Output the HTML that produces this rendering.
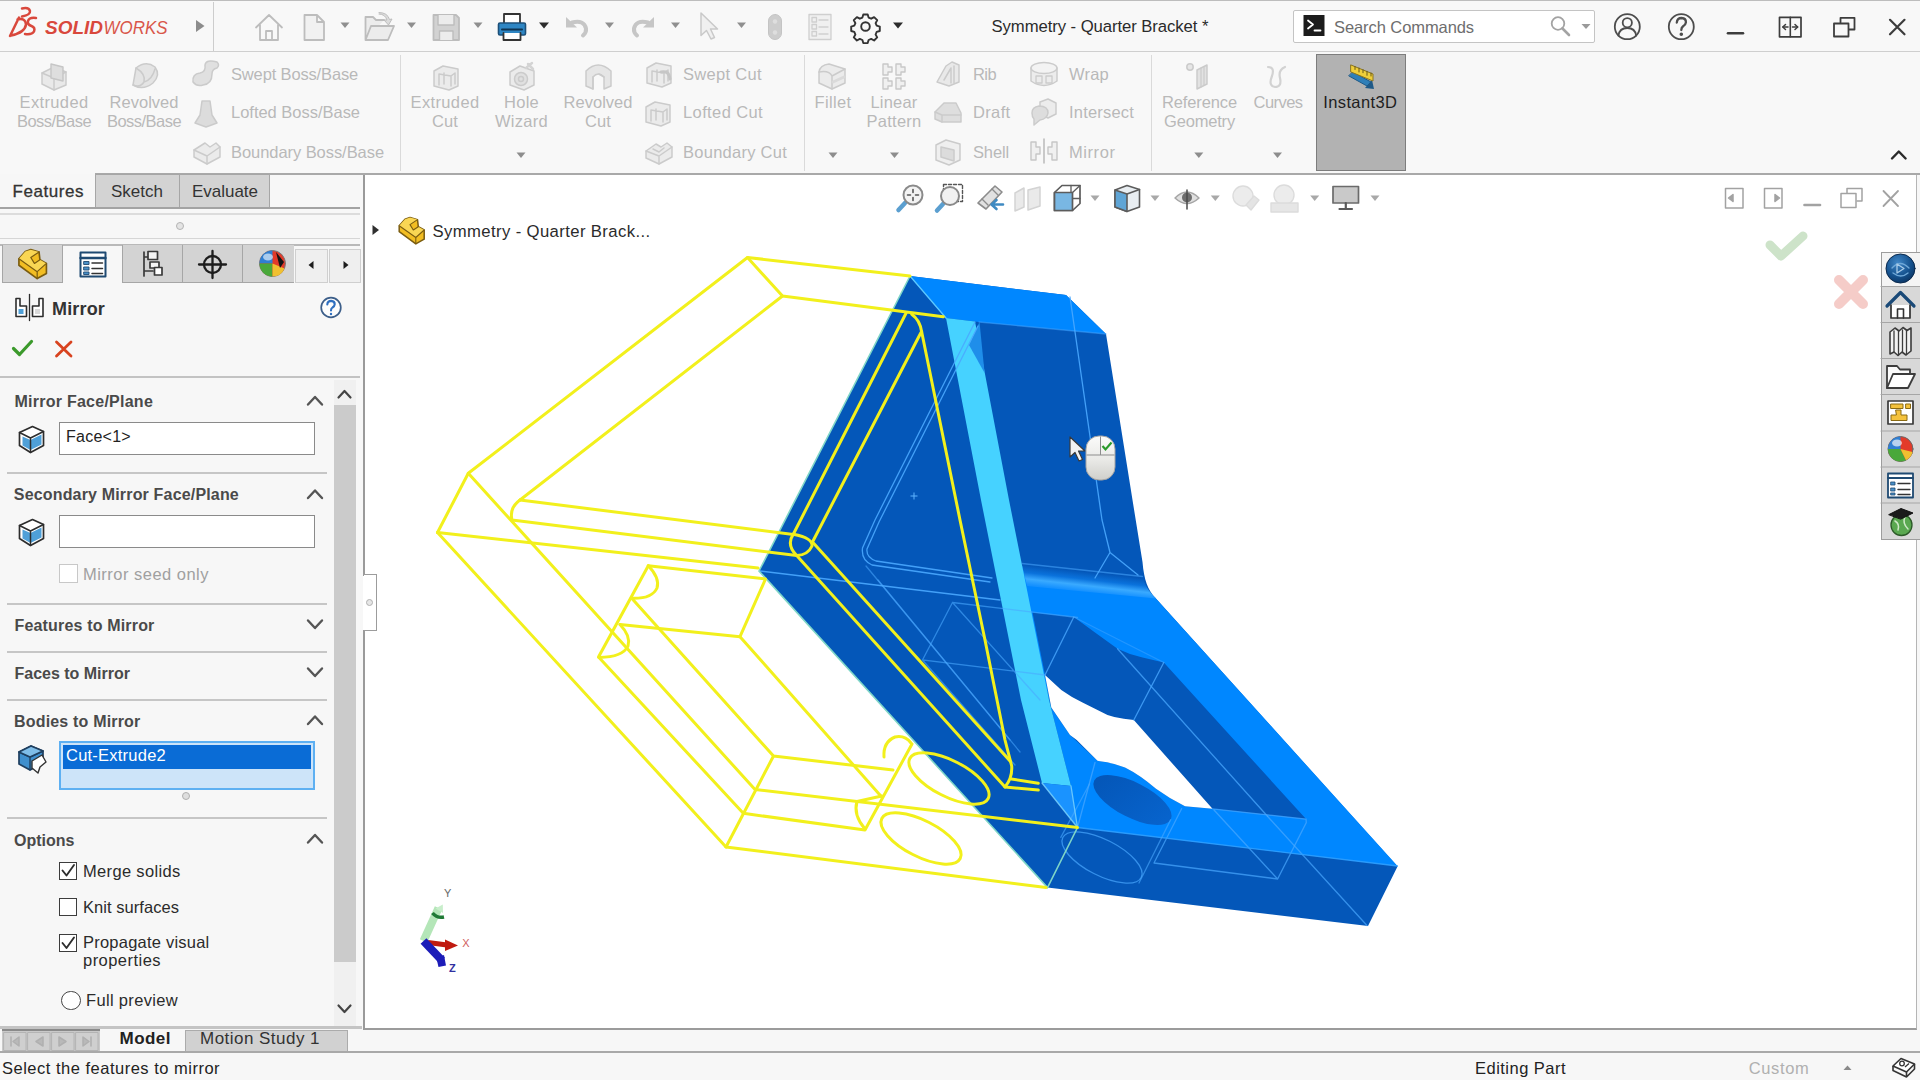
<!DOCTYPE html>
<html lang="en">
<head>
<meta charset="utf-8">
<title>SOLIDWORKS - Symmetry - Quarter Bracket</title>
<style>
html,body{margin:0;padding:0;}
body{width:1920px;height:1080px;overflow:hidden;position:relative;background:#f7f7f7;font-family:"Liberation Sans",sans-serif;}
.a{position:absolute;box-sizing:border-box;}
.t{position:absolute;white-space:nowrap;line-height:20px;font-family:"Liberation Sans",sans-serif;}
svg{position:absolute;overflow:visible;}
.sep{position:absolute;height:2px;background:#c6c6c6;left:7px;width:320px;}
.tab{position:absolute;box-sizing:border-box;background:#d3d3d3;border:1px solid #a6a6a6;}
.chk{position:absolute;box-sizing:border-box;width:18px;height:18px;background:#fff;border:1.5px solid #3c3c3c;}
</style>
</head>
<body>
<!-- ================= title bar ================= -->
<div class="a" id="titlebar" style="left:0;top:0;width:1920px;height:52px;background:#f8f8f8;border-top:1px solid #bdbdbd;border-bottom:1px solid #cfcfcf;"></div>
<div class="a" style="left:213px;top:2px;width:1px;height:49px;background:#cdcdcd;"></div>
<div class="a" id="search" style="left:1293px;top:10px;width:302px;height:33px;background:#fff;border:1px solid #c4c4c4;border-radius:2px;"></div>

<!-- ================= ribbon (CommandManager) ================= -->
<div class="a" id="ribbon" style="left:0;top:52px;width:1920px;height:122px;background:#f8f8f8;"></div>
<div class="a" style="left:400px;top:55px;width:1px;height:116px;background:#dadada;"></div>
<div class="a" style="left:804px;top:55px;width:1px;height:116px;background:#dadada;"></div>
<div class="a" style="left:1151px;top:55px;width:1px;height:116px;background:#dadada;"></div>
<div class="a" id="instant3d" style="left:1316px;top:54px;width:90px;height:117px;background:#b2b2b2;border:1.5px solid #7d7d7d;"></div>
<div class="a" style="left:95px;top:173px;width:1825px;height:2px;background:#a9a9a9;"></div>

<!-- ================= command manager tabs ================= -->
<div class="a" style="left:0;top:175px;width:362px;height:33px;background:#f7f7f7;"></div>
<div class="tab" style="left:95px;top:174px;width:85px;height:34px;"></div>
<div class="tab" style="left:179px;top:174px;width:91px;height:34px;"></div>
<div class="a" style="left:0;top:207px;width:360px;height:2px;background:#a3a3a3;"></div>
<div class="a" style="left:0;top:213px;width:360px;height:2px;background:#dcdcdc;"></div>
<div class="a" style="left:176px;top:222px;width:8px;height:8px;border-radius:50%;border:1.5px solid #b4b4b4;background:#e4e4e4;"></div>
<div class="a" style="left:0;top:238px;width:360px;height:1px;background:#d6d6d6;"></div>

<!-- ================= property manager icon tabs ================= -->
<div class="a" style="left:0;top:244px;width:360px;height:2px;background:#b9b9b9;"></div>
<div class="tab" style="left:2px;top:245px;width:61px;height:38px;border-top:none;"></div>
<div class="a" style="left:63px;top:246px;width:60px;height:38px;background:#f7f7f7;"></div>
<div class="tab" style="left:122px;top:245px;width:61px;height:38px;border-top:none;"></div>
<div class="tab" style="left:182px;top:245px;width:61px;height:38px;border-top:none;"></div>
<div class="tab" style="left:242px;top:245px;width:52px;height:38px;border-top:none;border-right:none;"></div>
<div class="a" style="left:295px;top:249px;width:33px;height:34px;background:#efefef;border:1px solid #cfcfcf;"></div>
<div class="a" style="left:329px;top:249px;width:32px;height:34px;background:#efefef;border:1px solid #cfcfcf;"></div>

<!-- ================= property manager body ================= -->
<div class="a" style="left:0;top:376px;width:360px;height:2px;background:#c3c3c3;"></div>
<div class="a" id="in1" style="left:59px;top:422px;width:256px;height:33px;background:#fff;border:1.5px solid #8a8a8a;"></div>
<div class="sep" style="top:472px;"></div>
<div class="a" id="in2" style="left:59px;top:515px;width:256px;height:33px;background:#fff;border:1.5px solid #8a8a8a;"></div>
<div class="a" style="left:59px;top:564px;width:19px;height:19px;background:#fff;border:1px solid #c8c8c8;"></div>
<div class="sep" style="top:603px;"></div>
<div class="sep" style="top:651px;"></div>
<div class="sep" style="top:699px;"></div>
<div class="a" id="list" style="left:59px;top:741px;width:256px;height:49px;background:#cde4f9;border:2px solid #5eb0f2;"></div>
<div class="a" style="left:62.5px;top:745px;width:248.5px;height:24px;background:#0a6cd6;"></div>
<div class="a" style="left:182px;top:792px;width:8px;height:8px;border-radius:50%;border:1.5px solid #b0b0b0;background:#dedede;"></div>
<div class="sep" style="top:817px;"></div>
<div class="chk" style="left:59px;top:861.5px;"></div>
<div class="chk" style="left:59px;top:897.5px;"></div>
<div class="chk" style="left:59px;top:934px;"></div>
<div class="a" style="left:61px;top:990.5px;width:19.5px;height:19.5px;border-radius:50%;background:#fff;border:1.5px solid #444;"></div>
<!-- scrollbar -->
<div class="a" style="left:334px;top:380px;width:22px;height:646px;background:#f0f0f0;"></div>
<div class="a" style="left:334px;top:405px;width:22px;height:557px;background:#cbcbcb;"></div>

<!-- ================= graphics viewport ================= -->
<div class="a" id="viewport" style="left:363px;top:175px;width:1554px;height:855px;background:#fff;border-left:2px solid #9a9a9a;border-bottom:2px solid #9b9b9b;border-right:1px solid #b5b5b5;"></div>
<div class="a" style="left:364px;top:574px;width:13px;height:57px;background:#fff;border:1.5px solid #9c9c9c;border-left:none;"></div>
<div class="a" style="left:363px;top:575.5px;width:3px;height:54px;background:#fff;"></div>
<div class="a" style="left:365.5px;top:598.5px;width:7px;height:7px;border-radius:50%;border:1.2px solid #b0b0b0;background:#e6e6e6;"></div>

<!-- ================= bottom tabs + status bar ================= -->
<div class="a" style="left:0;top:1026px;width:362px;height:3px;background:#c4c4c4;"></div>
<div class="a" style="left:0;top:1030px;width:1920px;height:22px;background:#f7f7f7;"></div>
<div class="a" style="left:2px;top:1029px;width:98px;height:23px;background:#c9c9c9;border-top:2px solid #8a8a8a;"></div>
<div class="a" style="left:100px;top:1029px;width:86px;height:23px;background:#f7f7f7;"></div>
<div class="a" style="left:185px;top:1030px;width:163px;height:22px;background:#d1d1d1;border:1px solid #ababab;border-bottom:none;"></div>
<div class="a" style="left:0;top:1051px;width:1920px;height:2px;background:#a9a9a9;"></div>
<div class="a" id="statusbar" style="left:0;top:1053px;width:1920px;height:27px;background:#f7f7f7;"></div>
<div id="labels">
<span class="t" style="left:991.5px;top:17.2px;font-size:16.7px;color:#2b2b2b;letter-spacing:-0.07px;">Symmetry - Quarter Bracket *</span>
<span class="t" style="left:1334.0px;top:17.3px;font-size:16.5px;color:#6e6e6e;letter-spacing:-0.08px;">Search Commands</span>
<span class="t" style="left:19.5px;top:92.3px;font-size:16.5px;color:#b9b9b9;letter-spacing:0.37px;">Extruded</span>
<span class="t" style="left:17.0px;top:111.3px;font-size:16.5px;color:#b9b9b9;letter-spacing:-0.54px;">Boss/Base</span>
<span class="t" style="left:109.5px;top:92.3px;font-size:16.5px;color:#b9b9b9;letter-spacing:0.03px;">Revolved</span>
<span class="t" style="left:107.0px;top:111.3px;font-size:16.5px;color:#b9b9b9;letter-spacing:-0.54px;">Boss/Base</span>
<span class="t" style="left:410.5px;top:92.3px;font-size:16.5px;color:#b9b9b9;letter-spacing:0.37px;">Extruded</span>
<span class="t" style="left:432.0px;top:111.3px;font-size:16.5px;color:#b9b9b9;letter-spacing:0.11px;">Cut</span>
<span class="t" style="left:504.0px;top:92.3px;font-size:16.5px;color:#b9b9b9;letter-spacing:0.27px;">Hole</span>
<span class="t" style="left:495.0px;top:111.3px;font-size:16.5px;color:#b9b9b9;letter-spacing:0.28px;">Wizard</span>
<span class="t" style="left:563.5px;top:92.3px;font-size:16.5px;color:#b9b9b9;letter-spacing:0.03px;">Revolved</span>
<span class="t" style="left:585.0px;top:111.3px;font-size:16.5px;color:#b9b9b9;letter-spacing:0.11px;">Cut</span>
<span class="t" style="left:870.5px;top:92.3px;font-size:16.5px;color:#b9b9b9;letter-spacing:0.19px;">Linear</span>
<span class="t" style="left:866.5px;top:111.3px;font-size:16.5px;color:#b9b9b9;letter-spacing:0.26px;">Pattern</span>
<span class="t" style="left:1162.0px;top:92.3px;font-size:16.5px;color:#b9b9b9;letter-spacing:-0.13px;">Reference</span>
<span class="t" style="left:1164.0px;top:111.3px;font-size:16.5px;color:#b9b9b9;letter-spacing:-0.18px;">Geometry</span>
<span class="t" style="left:814.5px;top:92.3px;font-size:16.5px;color:#b9b9b9;letter-spacing:0.36px;">Fillet</span>
<span class="t" style="left:1253.5px;top:92.3px;font-size:16.5px;color:#b9b9b9;letter-spacing:-0.54px;">Curves</span>
<span class="t" style="left:1323.3px;top:92.3px;font-size:16.5px;color:#1e1e1e;letter-spacing:0.37px;">Instant3D</span>
<span class="t" style="left:231.0px;top:63.8px;font-size:16.5px;color:#b9b9b9;letter-spacing:-0.15px;">Swept Boss/Base</span>
<span class="t" style="left:231.0px;top:102.3px;font-size:16.5px;color:#b9b9b9;letter-spacing:-0.02px;">Lofted Boss/Base</span>
<span class="t" style="left:231.0px;top:141.8px;font-size:16.5px;color:#b9b9b9;letter-spacing:-0.06px;">Boundary Boss/Base</span>
<span class="t" style="left:683.0px;top:63.8px;font-size:16.5px;color:#b9b9b9;letter-spacing:0.32px;">Swept Cut</span>
<span class="t" style="left:683.0px;top:102.3px;font-size:16.5px;color:#b9b9b9;letter-spacing:0.39px;">Lofted Cut</span>
<span class="t" style="left:683.0px;top:141.8px;font-size:16.5px;color:#b9b9b9;letter-spacing:0.26px;">Boundary Cut</span>
<span class="t" style="left:973.0px;top:63.8px;font-size:16.5px;color:#b9b9b9;letter-spacing:-0.59px;">Rib</span>
<span class="t" style="left:973.0px;top:102.3px;font-size:16.5px;color:#b9b9b9;letter-spacing:0.35px;">Draft</span>
<span class="t" style="left:973.0px;top:141.8px;font-size:16.5px;color:#b9b9b9;letter-spacing:-0.14px;">Shell</span>
<span class="t" style="left:1069.0px;top:63.8px;font-size:16.5px;color:#b9b9b9;letter-spacing:0.22px;">Wrap</span>
<span class="t" style="left:1069.0px;top:102.3px;font-size:16.5px;color:#b9b9b9;letter-spacing:0.19px;">Intersect</span>
<span class="t" style="left:1069.0px;top:141.8px;font-size:16.5px;color:#b9b9b9;letter-spacing:0.57px;">Mirror</span>
<span class="t" style="left:12.5px;top:181.6px;font-size:17px;color:#333;letter-spacing:0.55px;-webkit-text-stroke:0.3px #333;">Features</span>
<span class="t" style="left:111.0px;top:181.6px;font-size:17px;color:#333;letter-spacing:0.00px;">Sketch</span>
<span class="t" style="left:192.0px;top:181.6px;font-size:17px;color:#333;letter-spacing:-0.02px;">Evaluate</span>
<span class="t" style="left:432.5px;top:222.2px;font-size:16.7px;color:#2b2b2b;letter-spacing:0.38px;">Symmetry - Quarter Brack...</span>
<span class="t" style="left:52.0px;top:298.8px;font-size:18px;color:#333;letter-spacing:0.17px;font-weight:bold;">Mirror</span>
<span class="t" style="left:14.5px;top:392.0px;font-size:16px;color:#4a4a4a;letter-spacing:0.25px;font-weight:bold;">Mirror Face/Plane</span>
<span class="t" style="left:66.0px;top:426.5px;font-size:16px;color:#222;letter-spacing:0.26px;">Face&lt;1&gt;</span>
<span class="t" style="left:13.8px;top:485.3px;font-size:16px;color:#4a4a4a;letter-spacing:0.17px;font-weight:bold;">Secondary Mirror Face/Plane</span>
<span class="t" style="left:83.0px;top:563.8px;font-size:16.5px;color:#a0a0a0;letter-spacing:0.48px;">Mirror seed only</span>
<span class="t" style="left:14.5px;top:615.5px;font-size:16px;color:#4a4a4a;letter-spacing:0.17px;font-weight:bold;">Features to Mirror</span>
<span class="t" style="left:14.5px;top:663.5px;font-size:16px;color:#4a4a4a;letter-spacing:-0.01px;font-weight:bold;">Faces to Mirror</span>
<span class="t" style="left:14.0px;top:711.5px;font-size:16px;color:#4a4a4a;letter-spacing:0.18px;font-weight:bold;">Bodies to Mirror</span>
<span class="t" style="left:66.0px;top:745.3px;font-size:16.5px;color:#fff;letter-spacing:0.23px;">Cut-Extrude2</span>
<span class="t" style="left:14.0px;top:830.5px;font-size:16px;color:#4a4a4a;letter-spacing:0.01px;font-weight:bold;">Options</span>
<span class="t" style="left:83.0px;top:861.3px;font-size:16.5px;color:#2b2b2b;letter-spacing:0.33px;">Merge solids</span>
<span class="t" style="left:83.0px;top:897.3px;font-size:16.5px;color:#2b2b2b;letter-spacing:0.05px;">Knit surfaces</span>
<span class="t" style="left:83.0px;top:932.3px;font-size:16.5px;color:#2b2b2b;letter-spacing:0.22px;">Propagate visual</span>
<span class="t" style="left:83.0px;top:950.3px;font-size:16.5px;color:#2b2b2b;letter-spacing:0.46px;">properties</span>
<span class="t" style="left:86.0px;top:990.1px;font-size:16.5px;color:#2b2b2b;letter-spacing:0.33px;">Full preview</span>
<span class="t" style="left:119.5px;top:1029.1px;font-size:17px;color:#222;letter-spacing:0.48px;font-weight:bold;">Model</span>
<span class="t" style="left:200.0px;top:1029.1px;font-size:17px;color:#333;letter-spacing:0.47px;">Motion Study 1</span>
<span class="t" style="left:2.0px;top:1058.1px;font-size:16.5px;color:#222;letter-spacing:0.50px;">Select the features to mirror</span>
<span class="t" style="left:1475.0px;top:1058.1px;font-size:16.5px;color:#222;letter-spacing:0.48px;">Editing Part</span>
<span class="t" style="left:1748.8px;top:1058.1px;font-size:16.5px;color:#b0b0b0;letter-spacing:0.61px;">Custom</span>
<span class="t" style="left:444.0px;top:882.9px;font-size:11px;color:#666;letter-spacing:0.66px;">Y</span>
<span class="t" style="left:462.2px;top:932.9px;font-size:11px;color:#d06060;letter-spacing:-0.34px;">X</span>
<span class="t" style="left:449.0px;top:957.9px;font-size:11px;color:#3030a0;letter-spacing:0.28px;font-weight:bold;">Z</span>
</div>
<!-- ================= icons ================= -->
<svg id="icons-top" style="left:0;top:0;" width="1920" height="180" viewBox="0 0 1920 180" fill="none" stroke-linejoin="round" stroke-linecap="round">
<!-- SOLIDWORKS logo -->
<g id="logo" stroke="#d9483c" fill="none" stroke-width="2.500">
  <path d="M22,8.5 q7,-1.5 8,2.5 q0.5,4 -8,5.5"/>
  <path d="M10,36 L19,17.5 M17.5,19.5 q8,-2 8.5,5 q-1,8 -15,11"/>
  <path d="M36,18 q-6.5,-1 -8,3 q-1,3.5 3.5,5 q4,1.500 2.5,5.500 q-2,3.500 -9,2.500"/>
</g>
<text x="45" y="33.5" font-family="Liberation Sans, sans-serif" font-size="17.5" font-weight="bold" font-style="italic" fill="#d9483c" stroke="none" textLength="58" lengthAdjust="spacingAndGlyphs">SOLID</text>
<text x="103.500" y="33.5" font-family="Liberation Sans, sans-serif" font-size="17.5" font-style="italic" fill="#d9564a" stroke="none" textLength="64" lengthAdjust="spacingAndGlyphs">WORKS</text>
<path d="M196,20 L204.500,26 L196,32 Z" fill="#8c8c8c" stroke="none"/>

<!-- quick access toolbar (mostly disabled / grey) -->
<g stroke="#bdbdbd" stroke-width="1.8" fill="none">
  <!-- home -->
  <path d="M256,27.500 L269,15 L282,27.500 M260,25 V40 H278 V25 M266,40 V31 H272 V40"/>
  <!-- new -->
  <path d="M304.500,15 H317 L324,22 V40 H304.500 Z M317,15 V22 H324" fill="#f1f1f1"/>
  <!-- open -->
  <path d="M365.500,40 V17 H373 L376,20 H384 M365.500,40 L371,26 H394 L388,40 Z" fill="#ececec"/>
  <path d="M379,14 q6,0 8,6 l-3,0 l4.500,5 l3.500,-6 l-2.500,0.500 q-2,-7 -10.500,-7" fill="#dcdcdc" stroke-width="1"/>
  <!-- save -->
  <path d="M433.500,15 H456 L459,18 V40 H433.500 Z" fill="#d2d2d2"/>
  <path d="M438,15 V25 H454 V15 M439.500,40 V31 H453 V40" fill="#ececec" stroke-width="1.4"/>
</g>
<g fill="#8f8f8f" stroke="none">
  <path d="M340.500,22.500 h9 l-4.500,5.500 z"/><path d="M407,22.500 h9 l-4.500,5.500 z"/><path d="M473.500,22.500 h9 l-4.500,5.500 z"/>
  <path d="M605,22.500 h9 l-4.500,5.500 z"/><path d="M671,22.500 h9 l-4.500,5.500 z"/><path d="M737,22.500 h9 l-4.500,5.500 z"/>
</g>
<g fill="#2c2c2c" stroke="none">
  <path d="M539,22.500 h10 l-5,6 z"/><path d="M893,22.500 h10 l-5,6 z"/>
</g>
<!-- print (enabled) -->
<g>
  <path d="M504,23 V14 H520 V23" fill="#fff" stroke="#333" stroke-width="1.8"/>
  <rect x="498.500" y="23" width="27" height="12" rx="1.500" fill="#2e86c4" stroke="#1d4f78" stroke-width="1.600"/>
  <path d="M502,29.500 H522" stroke="#0f3350" stroke-width="2"/>
  <path d="M503.500,33 V40 H520.500 V33" fill="#fff" stroke="#333" stroke-width="1.800"/>
</g>
<!-- undo / redo -->
<g stroke="#c6c6c6" stroke-width="4" fill="none">
  <path d="M572,22.500 q12,-3 14,6 q0.500,4 -3,7"/>
  <path d="M648,22.500 q-12,-3 -14,6 q-0.500,4 3,7"/>
</g>
<path d="M566,17 V27.500 H577 Z" fill="#c6c6c6" stroke="none"/>
<path d="M654,17 V27.500 H643 Z" fill="#c6c6c6" stroke="none"/>
<!-- select cursor -->
<path d="M701,13 V35.500 L706.500,30.500 L711,39 L714.500,37.500 L710.500,29 H717.500 Z" fill="#f0f0f0" stroke="#c9c9c9" stroke-width="1.500"/>
<!-- traffic light -->
<rect x="768.500" y="14.500" width="13" height="25" rx="6.500" fill="#cdcdcd" stroke="#c4c4c4" stroke-width="1"/>
<circle cx="775" cy="21.500" r="2.200" fill="#dedede" stroke="none"/><circle cx="775" cy="32.500" r="2.200" fill="#dedede" stroke="none"/>
<!-- options list -->
<g stroke="#cfcfcf" stroke-width="1.300" fill="none">
  <rect x="809" y="14.500" width="22" height="25" fill="#f0f0f0"/>
  <rect x="812" y="17.500" width="4.500" height="4.500"/><rect x="812" y="24.500" width="4.500" height="4.500"/><rect x="812" y="31.500" width="4.500" height="4.500"/>
  <path d="M819,20 H828 M819,27 H828 M819,34 H828"/>
</g>
<!-- gear (enabled) -->
<g transform="translate(865.5 26.500)">
  <path d="M-2.200,-12 h4.400 l0.900,3.100 l2.600,1.100 l2.900,-1.600 l3.100,3.100 l-1.600,2.900 l1.100,2.600 l3.100,0.900 v4.400 l-3.100,0.900 l-1.100,2.600 l1.600,2.900 l-3.100,3.100 l-2.900,-1.600 l-2.600,1.100 l-0.900,3.100 h-4.400 l-0.900,-3.100 l-2.600,-1.100 l-2.900,1.600 l-3.100,-3.100 l1.600,-2.900 l-1.100,-2.600 l-3.100,-0.900 v-4.400 l3.100,-0.900 l1.100,-2.600 l-1.600,-2.900 l3.100,-3.100 l2.900,1.600 l2.600,-1.100 z" fill="none" stroke="#333" stroke-width="1.900"/>
  <circle r="4.300" fill="none" stroke="#333" stroke-width="1.900"/>
</g>

<!-- search box -->
<rect x="1303.500" y="15" width="21" height="21" fill="#1c1c1c" stroke="none"/>
<path d="M1308,20.500 l5,4 l-5,4 M1314.500,30.500 h6" stroke="#fff" stroke-width="1.800" fill="none"/>
<circle cx="1558" cy="23.500" r="6.300" stroke="#a3a3a3" stroke-width="1.800" fill="none"/>
<path d="M1562.500,28.500 L1569,35" stroke="#a3a3a3" stroke-width="2.600"/>
<path d="M1581.500,24 h9 l-4.500,5 z" fill="#9a9a9a" stroke="none"/>
<!-- user / help -->
<g stroke="#4d4d4d" stroke-width="1.800" fill="none">
  <circle cx="1627.300" cy="26.700" r="12.500"/>
  <circle cx="1627.300" cy="22.700" r="4.600"/>
  <path d="M1618.500,35.500 q1,-7.500 8.800,-7.500 q7.800,0 8.800,7.500"/>
  <circle cx="1681.300" cy="26.700" r="12.500"/>
  <path d="M1676.800,22.500 q0.300,-4.500 4.800,-4.500 q4.500,0.300 4.300,4.300 q-0.300,2.500 -2.800,4 q-1.800,1.300 -1.800,3.700" stroke-width="2.300"/>
  <circle cx="1681.300" cy="34.300" r="0.900" fill="#4d4d4d"/>
</g>
<!-- window buttons -->
<g stroke="#3d3d3d" stroke-width="2" fill="none">
  <path d="M1728,33.300 H1743" stroke-width="2.600"/>
  <rect x="1779.500" y="17.300" width="21.500" height="19.500" stroke-width="1.700"/>
  <path d="M1790.300,17.300 V36.800 M1783,27 H1788 M1792.500,27 H1797.500" stroke-width="1.600"/>
  <path d="M1785.500,24.500 l-2.700,2.500 l2.700,2.500 M1795,24.500 l2.700,2.500 l-2.700,2.500" stroke-width="1.500"/>
  <path d="M1840.500,22.500 V17.800 H1854.500 V29.500 H1849.500" stroke-width="1.800"/>
  <rect x="1834" y="23.500" width="14.500" height="13" stroke-width="1.800"/>
  <path d="M1890,19.800 L1904.500,34.300 M1904.500,19.800 L1890,34.300" stroke-width="2.200"/>
  <path d="M1892,158.500 L1898.800,151.500 L1905.600,158.500" stroke-width="2.400" stroke="#2a2a2a"/>
</g>
</svg>
<!-- ================= ribbon icons (disabled look) ================= -->
<svg id="icons-ribbon" style="left:0;top:0;" width="1920" height="180" viewBox="0 0 1920 180" fill="none" stroke-linejoin="round" stroke-linecap="round">
<defs>
  <g id="blk" stroke="#cbcbcb" stroke-width="1.500">
    <path d="M-12,-4 L0,-10 L12,-5 V8 L0,13 L-12,7 Z" fill="#e9e9e9"/>
    <path d="M-12,-4 L0,1 L12,-5 M0,1 V13" />
  </g>
  <g id="cutblk" stroke="#cbcbcb" stroke-width="1.500">
    <path d="M-12,-6 L-3,-11 L12,-8 V9 L3,13 L-12,9 Z" fill="#ebebeb"/>
    <path d="M-7,-3 L5,-1 V9 M-7,-3 V8 M-2,-4 V7 M5,-1 L9,-4 V7" />
  </g>
  <path id="dd" d="M-4.500,-2.500 h9 l-4.500,5.500 z" fill="#8d8d8d" stroke="none"/>
</defs>
<!-- Extruded Boss/Base -->
<g transform="translate(54 77)"><use href="#blk"/><path d="M-3,-13 L9,-10 V4 L-3,1 Z" fill="#dedede" stroke="#c6c6c6" stroke-width="1.400"/></g>
<!-- Revolved Boss/Base -->
<g transform="translate(145 76)" stroke="#cbcbcb" stroke-width="1.500">
  <path d="M-9,-8 q10,-8 19,-1 q6,8 -2,16 q-10,8 -20,2 z" fill="#e4e4e4"/>
  <path d="M-9,-8 q10,6 8,14 q-4,6 -11,3 M-1,6 q8,-2 11,-13" />
</g>
<!-- Swept Boss/Base -->
<g transform="translate(206 74)" stroke="#cbcbcb" stroke-width="1.500">
  <path d="M-13,8 q-1,-8 7,-9 q6,-1 5,-8 q1,-6 12,-3 q3,3 0,6 q-5,1 -5,6 q0,10 -9,11 q-6,2 -10,-3 z" fill="#e0e0e0"/>
</g>
<!-- Lofted Boss/Base -->
<g transform="translate(206 113)" stroke="#cbcbcb" stroke-width="1.500">
  <path d="M-4,-12 h8 l2,14 l5,8 l-11,4 l-11,-4 l5,-8 z" fill="#dcdcdc"/>
</g>
<!-- Boundary Boss/Base -->
<g transform="translate(207 152)" stroke="#cbcbcb" stroke-width="1.500">
  <path d="M-13,-2 L-2,-9 L3,-5 L9,-9 L13,-5 V5 L0,12 L-13,5 Z" fill="#ebebeb"/>
  <path d="M-13,-2 L0,4 L13,-5 M0,4 V12"/>
</g>
<!-- Extruded Cut -->
<g transform="translate(446 77)"><use href="#cutblk"/></g>
<!-- Hole Wizard -->
<g transform="translate(522 77)" stroke="#cbcbcb" stroke-width="1.500">
  <path d="M-12,-5 L-2,-11 L12,-6 V8 L2,13 L-12,8 Z" fill="#ebebeb"/>
  <circle cx="-1" cy="2" r="6.500" fill="#e0e0e0"/><circle cx="-1" cy="2" r="2.500"/>
  <path d="M4,-9 l6,-5 M6,-13 l5,5" stroke="#d4d4d4" stroke-width="2.500"/>
</g>
<!-- Revolved Cut -->
<g transform="translate(598 76)" stroke="#cbcbcb" stroke-width="1.500">
  <path d="M-12,-5 q12,-12 25,0 V10 l-7,3 V1 q-6,-6 -11,0 V13 l-7,-3 Z" fill="#e6e6e6"/>
  <path d="M-5,1 L-5,13 M6,1 L1,-2"/>
</g>
<!-- Swept / Lofted / Boundary Cut -->
<g transform="translate(659 74)"><use href="#cutblk"/><path d="M2,-2 q8,-2 9,7" stroke="#c6c6c6" stroke-width="3"/></g>
<g transform="translate(658 113)"><use href="#cutblk"/></g>
<g transform="translate(659 152)" stroke="#cbcbcb" stroke-width="1.500">
  <path d="M-13,-1 L-3,-8 L2,-5 L8,-9 L13,-5 V5 L0,12 L-13,6 Z" fill="#ebebeb"/>
  <path d="M-13,-1 L0,4 L13,-5 M0,4 V12 M-6,-3 l6,3 l5,-4" />
</g>
<!-- Fillet -->
<g transform="translate(832 76)" stroke="#cbcbcb" stroke-width="1.500">
  <path d="M-13,-4 Q-12,-11 -3,-12 L13,-7 V7 L0,13 L-13,7 Z" fill="#ebebeb"/>
  <path d="M-13,-4 Q-3,-6 0,0 L13,-7 M0,0 V13"/>
  <path d="M1,6 l11,-5" stroke-width="3" stroke="#dadada"/>
</g>
<!-- Linear Pattern -->
<g transform="translate(894 76)" stroke="#c8c8c8" stroke-width="1.400">
  <path d="M-11,-12 h5 v3 h4 v5 h-4 v3 h-5 z M2,-12 h5 v3 h4 v5 h-4 v3 h-5 z M-11,2 h5 v3 h4 v5 h-4 v3 h-5 z M2,2 h5 v3 h4 v5 h-4 v3 h-5 z" fill="#f0f0f0"/>
</g>
<!-- Rib / Draft / Shell -->
<g transform="translate(948 74)" stroke="#cbcbcb" stroke-width="1.500">
  <path d="M-11,8 L-2,-8 L4,-12 L11,-9 V8 L1,12 Z" fill="#e9e9e9"/><path d="M-4,6 L3,-6 V9 M6,-8 V9"/>
</g>
<g transform="translate(948 112)" stroke="#cbcbcb" stroke-width="1.500">
  <path d="M-13,0 L-4,-9 L8,-9 L13,1 V10 H-6 L-13,7 Z" fill="#dedede"/><path d="M-13,0 L-6,3 H13 M-6,3 V10"/>
</g>
<g transform="translate(948 152)" stroke="#cbcbcb" stroke-width="1.500">
  <path d="M-12,-7 L-2,-12 L12,-8 V8 L1,13 L-12,8 Z" fill="#efefef"/><path d="M-7,-5 L6,-2 V9 L-7,5 Z" fill="#dcdcdc"/>
</g>
<!-- Wrap / Intersect / Mirror -->
<g transform="translate(1044 74)" stroke="#cbcbcb" stroke-width="1.500">
  <path d="M-13,-6 V7 q13,9 26,0 V-6" fill="#ececec"/><ellipse cx="0" cy="-6" rx="13" ry="5.500" fill="#f3f3f3"/>
  <path d="M-8,2 h6 v7 h-6 z M2,2 h6 v7 h-6 z" stroke-width="1.300"/>
</g>
<g transform="translate(1044 112)" stroke="#cbcbcb" stroke-width="1.500">
  <path d="M-4,-10 L4,-13 L12,-9 V2 L4,6 L-4,2 Z" fill="#ececec"/>
  <path d="M-12,1 q0,-6 7,-7 q9,0 9,7 q-1,6 -8,7 l-6,5 v-6 q-2,-2 -2,-6z" fill="#dddddd"/>
</g>
<g transform="translate(1044 151)" stroke="#c6c6c6" stroke-width="1.400">
  <path d="M-13,-9 h5 v5 h4 v7 h-4 v6 h-5 z M13,-9 h-5 v5 h-4 v7 h4 v6 h5 z" fill="#f0f0f0"/>
  <path d="M0,-12 V12" stroke="#b5b5b5"/>
</g>
<!-- Reference Geometry / Curves -->
<g transform="translate(1199 76)" stroke="#cbcbcb" stroke-width="1.500">
  <path d="M-2,-6 L8,-11 V8 L-2,13 Z" fill="#e2e2e2"/><path d="M2,-8 V11 M5,-9.500 V9.500" stroke-width="1.200"/>
  <circle cx="-9" cy="-9" r="3.200" fill="#e6e6e6"/>
</g>
<g transform="translate(1277 77)" stroke="#d2d2d2" stroke-width="2.200">
  <path d="M-9,-10 q7,0 4,9 q-4,10 3,11 q7,0 5,-9 q-2,-8 5,-11"/>
</g>
<!-- drop-down arrows -->
<use href="#dd" x="521" y="155"/><use href="#dd" x="833" y="155"/><use href="#dd" x="894.500" y="155"/><use href="#dd" x="1198.800" y="155"/><use href="#dd" x="1277.500" y="155"/>
<!-- Instant3D (enabled, colour) -->
<g transform="translate(1361 77)">
  <path d="M-12,-1 L6,9 L10,5 L-8,-5 Z" fill="#2f7fb8" stroke="#1f5a88" stroke-width="1"/>
  <path d="M4,11 L13,12 L11,3 Z" fill="#1f5a88" stroke="none"/>
  <path d="M-10,-12 L12,-3 L12,4 L-10,-5 Z" fill="#f0cf3a" stroke="#8a7420" stroke-width="1"/>
  <path d="M-6,-10.500 v3 M-2,-9 v4 M2,-7.300 v3 M6,-5.700 v4 M10,-4 v3" stroke="#6a5a18" stroke-width="1"/>
</g>
</svg>
<!-- ================= viewport: heads-up toolbar, window buttons, tree, task pane ================= -->
<div class="a" id="taskpane" style="left:1881px;top:252px;width:39px;height:288px;background:#d8d8d8;border:1px solid #9d9d9d;border-right:none;"></div>
<div class="a" style="left:1882px;top:253px;width:38px;height:33px;background:#f4f4f4;"></div>
<svg id="icons-view" style="left:0;top:0;" width="1920" height="1080" viewBox="0 0 1920 1080" fill="none" stroke-linejoin="round" stroke-linecap="round">
<defs>
  <path id="dd2" d="M-4.500,-2.500 h9 l-4.500,5.500 z" fill="#a8a8a8" stroke="none"/>
  <radialGradient id="ballg" cx="0.4" cy="0.35" r="0.7"><stop offset="0" stop-color="#ffffff"/><stop offset="1" stop-color="#d8d8d8"/></radialGradient>
  <radialGradient id="globeg" cx="0.4" cy="0.3" r="0.8"><stop offset="0" stop-color="#3f86c6"/><stop offset="0.6" stop-color="#14508c"/><stop offset="1" stop-color="#0a2f5a"/></radialGradient>
</defs>
<!-- zoom to fit -->
<g>
  <path d="M905,203 L898.500,210" stroke="#5b9fd0" stroke-width="4.500"/>
  <circle cx="913" cy="195" r="9.500" fill="#f3f3f3" stroke="#8a8a8a" stroke-width="2"/>
  <path d="M913,189.500 v3 M913,197.500 v3 M907.500,195 h3 M915.500,195 h3" stroke="#555" stroke-width="1.600"/>
</g>
<!-- zoom to area -->
<g>
  <rect x="943.500" y="184.500" width="19" height="17" stroke="#555" stroke-width="1.400" stroke-dasharray="3 2"/>
  <path d="M943,204 L937,210.500" stroke="#5b9fd0" stroke-width="4.500"/>
  <circle cx="950" cy="196" r="9" fill="#f1f1f1" stroke="#8a8a8a" stroke-width="2"/>
</g>
<!-- previous view -->
<g>
  <path d="M978,203 L995,186 L1002,192 L986,209 Z" fill="#e1e1e1" stroke="#8c8c8c" stroke-width="1.600"/>
  <path d="M982,199 l6,6 M992,189 l6,6" stroke="#8c8c8c" stroke-width="1.400"/>
  <path d="M1003,204.500 H992 M996.500,200 l-5,4.500 l5,4.500" stroke="#3f8ac2" stroke-width="2.600"/>
</g>
<!-- section view (disabled) -->
<g stroke="#d3d3d3" stroke-width="1.500">
  <path d="M1015,193 L1024,188 V207 L1015,211 Z M1028,190 L1040,187 V206 L1028,210 Z" fill="#eaeaea"/>
</g>
<!-- view orientation -->
<g stroke="#5c5c5c" stroke-width="1.700">
  <path d="M1054.500,192.500 L1062,185.500 H1080 V203.500 L1072.500,210.500 H1054.500 Z" fill="#fff"/>
  <rect x="1054.500" y="192.500" width="18" height="18" fill="#79b7e3"/>
  <path d="M1072.500,192.500 L1080,185.500 M1071,185.500 V192 M1072.500,198.500 H1080" stroke-width="1.300"/>
</g>
<use href="#dd2" x="1095" y="198"/>
<!-- display style -->
<g stroke="#5c5c5c" stroke-width="1.600">
  <path d="M1115,190 L1127,185.500 L1139.500,189.500 V207 L1127,211.500 L1115,207 Z" fill="#e9eef2"/>
  <path d="M1115,190 L1127,194 V211.500 L1115,207 Z" fill="#5fa5d6"/>
  <path d="M1127,194 L1139.500,189.500"/>
</g>
<use href="#dd2" x="1155" y="198"/>
<!-- hide / show -->
<g>
  <path d="M1175,198 Q1187,186 1199,198 Q1187,209 1175,198 Z" fill="#e0e0e0" stroke="#a6a6a6" stroke-width="1.500"/>
  <circle cx="1187" cy="197.500" r="5" fill="#6d6d6d"/>
  <path d="M1187,190 V209" stroke="#4a4a4a" stroke-width="1.500"/>
</g>
<use href="#dd2" x="1215.300" y="198"/>
<!-- edit appearance / apply scene (disabled) -->
<g stroke="#dcdcdc" stroke-width="1.400">
  <circle cx="1243" cy="196" r="10" fill="#ececec"/><path d="M1246,205 l8,-9 l5,4 l-8,10 z" fill="#e4e4e4"/>
  <circle cx="1284" cy="195" r="10" fill="#ececec"/><path d="M1271,203 h27 v9 h-27 z" fill="#e6e6e6"/>
</g>
<use href="#dd2" x="1314.700" y="198"/>
<!-- view settings (monitor) -->
<g>
  <rect x="1333" y="186.500" width="25.500" height="16.500" fill="#c9c9c9" stroke="#6b6b6b" stroke-width="1.700"/>
  <path d="M1345.800,203 V208.500 M1339.500,209 H1352" stroke="#5a5a5a" stroke-width="2.200"/>
</g>
<use href="#dd2" x="1375" y="198"/>

<!-- document window buttons (grey) -->
<g stroke="#a2a2a2" stroke-width="1.500">
  <rect x="1725.500" y="188.500" width="17.500" height="19.500"/><path d="M1733,194.500 l-4.500,3.500 l4.500,3.500 z" fill="#a2a2a2"/>
  <rect x="1764.500" y="188.500" width="17.500" height="19.500"/><path d="M1775,194.500 l4.500,3.500 l-4.500,3.500 z" fill="#a2a2a2"/>
  <path d="M1804.500,205 H1820" stroke-width="2.600"/>
  <path d="M1847,193 V188.500 H1862 V201 H1857" /><rect x="1841" y="193.500" width="15" height="14"/>
  <path d="M1883.500,191 L1898,206 M1898,191 L1883.500,206" stroke-width="1.800"/>
</g>

<!-- flyout tree: arrow + part icon -->
<path d="M372.500,225 L379,230 L372.500,235 Z" fill="#2f2f2f" stroke="none"/>
<g transform="translate(412 231)">
  <path d="M-12.8,-5.2 L-7,-11.8 L-2,-13.5 L5.5,-11.4 L6.3,-4.3 L12.2,-1 V8.2 L3.8,12.8 L-12.8,0.7 Z" fill="#f2bd22" stroke="#7a5c10" stroke-width="1.500"/>
  <path d="M-12.8,-5.2 L-7,-11.8 L-2,-13.5 L5.5,-11.4 L-2,-6.4 L1.3,-1 L6.3,-4.3 L12.2,-1 L3.8,6.5 Z" fill="#f9d654" stroke="none"/>
  <path d="M-12.8,-5.2 L3.8,6.5 L12.2,-1 M3.8,6.5 V12.8 M-2,-6.4 L1.3,-1 L6.3,-4.3 M-2,-6.4 L5.5,-11.4" stroke="#7a5c10" stroke-width="1.100" fill="none"/>
</g>

<!-- task pane icons -->
<g>
  <circle cx="1900.500" cy="268.500" r="14.500" fill="url(#globeg)" stroke="#0b2a4e" stroke-width="1"/>
  <path d="M1892,268 q8,-9 17,0 M1893,273 q8,6 15,0" stroke="#6fa8d8" stroke-width="1.300"/>
  <path d="M1897,264 l7,4.500 l-7,4.500 z" fill="none" stroke="#a8cbe8" stroke-width="1.300"/>
  <!-- home -->
  <path d="M1887,306 L1900.500,292.500 L1914,306" stroke="#1a4a78" stroke-width="3.200"/>
  <path d="M1891,305 V318 H1910 V305" fill="#fff" stroke="#333" stroke-width="1.700"/><path d="M1897.500,318 V309 H1903.500 V318" stroke="#333" stroke-width="1.600"/>
  <!-- design library -->
  <path d="M1890,332 L1895,328 L1899,331 L1903,327.500 L1907,330.500 L1911,328 V351 L1906,355 L1902,352 L1898,355.500 L1894,352 L1890,354 Z" fill="#f2f2f2" stroke="#3c3c3c" stroke-width="1.600"/>
  <path d="M1894,331 V352 M1898.500,331 V355 M1902.500,330 V352 M1906.500,330.500 V354.500" stroke="#3c3c3c" stroke-width="1.300"/>
  <!-- file explorer -->
  <path d="M1887,388 V366 H1897 L1900,369.500 H1910 V374" fill="#fafafa" stroke="#3c3c3c" stroke-width="1.800"/>
  <path d="M1887,388 L1893,374 H1915 L1908,388 Z" fill="#fff" stroke="#3c3c3c" stroke-width="1.800"/>
  <!-- view palette -->
  <rect x="1888" y="401" width="25" height="23" fill="#fff" stroke="#3a3a3a" stroke-width="1.700"/>
  <path d="M1891,404 h12 v4.500 h-12 z M1906,404 h4.500 v4.500 h-4.500 z M1896,410 h5 v5 h6 v5.500 h-16 v-5.500 h5 z" fill="#f4c23c" stroke="#8a6a12" stroke-width="1"/>
  <!-- appearances -->
  <circle cx="1900.500" cy="449" r="12.500" fill="#e33a2a" stroke="#6a6a6a" stroke-width="1"/>
  <path d="M1900.500,449 L1900.500,436.500 A12.500,12.500 0 0 0 1888,449 Z" fill="#2f7fd2" stroke="none"/>
  <path d="M1900.500,449 L1888,449 A12.500,12.500 0 0 0 1906,460.300 Z" fill="#49a83a" stroke="none"/>
  <path d="M1900.500,449 L1906,460.300 A12.500,12.500 0 0 0 1912.500,452 Z" fill="#f0c030" stroke="none"/>
  <ellipse cx="1897" cy="443" rx="5" ry="3.500" fill="#fff" fill-opacity="0.650" stroke="none"/>
  <!-- custom properties -->
  <rect x="1888" y="473.500" width="25" height="24" fill="#fff" stroke="#1f4a72" stroke-width="1.800"/>
  <path d="M1888,478 H1913" stroke="#1f4a72" stroke-width="2"/>
  <path d="M1891,482 h4 v3 h-4 z M1891,488 h4 v3 h-4 z M1891,493 h4 v2 h-4 z" fill="#4a90c8" stroke="#1f4a72" stroke-width="0.800"/>
  <path d="M1898,483.500 H1910 M1898,489.500 H1910 M1898,494.500 H1910" stroke="#333" stroke-width="1.400"/>
  <!-- forum -->
  <circle cx="1901.500" cy="525" r="10.500" fill="#5aa850" stroke="#2c5a28" stroke-width="1.300"/>
  <path d="M1895,521 q5,3 3,9 M1905,517 q-3,6 3,12" stroke="#cfe8c8" stroke-width="1.500"/>
  <path d="M1889,514.500 L1901,508.500 L1913,513 L1901,519 Z" fill="#1a1a1a" stroke="#111" stroke-width="1"/>
</g>
<path d="M1881,286.500 H1920 M1881,322.500 H1920 M1881,358.500 H1920 M1881,394.500 H1920 M1881,431 H1920 M1881,467 H1920 M1881,503 H1920" stroke="#a6a6a6" stroke-width="1.200"/>
</svg>
<!-- ================= property manager icons ================= -->
<svg id="icons-pm" style="left:0;top:0;" width="500" height="1080" viewBox="0 0 500 1080" fill="none" stroke-linejoin="round" stroke-linecap="round">
<defs>
  <g id="cube">
    <path d="M-12,-7 L1,-13 L12,-8 V6 L-1,13 L-12,6 Z" fill="#fff" stroke="#2d2d2d" stroke-width="1.700"/>
    <path d="M-9,-3 L-1,0.500 L10,-5 V5 L-1,10.500 L-9,6 Z" fill="#4fa0d8" stroke="none"/>
    <path d="M-12,-7 L-1,-1.500 L12,-8 M-1,-1.500 V13" stroke="#2d2d2d" stroke-width="1.500"/>
  </g>
  <path id="chu" d="M-7,4 L0,-3.500 L7,4" stroke="#555" stroke-width="2.400"/>
  <path id="chd" d="M-7,-4 L0,3.500 L7,-4" stroke="#555" stroke-width="2.400"/>
</defs>
<!-- tab 1: feature manager -->
<g transform="translate(33 264.500) scale(1.1)">
  <path d="M-12.8,-5.2 L-7,-11.8 L-2,-13.5 L5.5,-11.4 L6.3,-4.3 L12.2,-1 V8.2 L3.8,12.8 L-12.8,0.7 Z" fill="#f2bd22" stroke="#7a5c10" stroke-width="1.500"/>
  <path d="M-12.8,-5.2 L-7,-11.8 L-2,-13.5 L5.5,-11.4 L-2,-6.4 L1.3,-1 L6.3,-4.3 L12.2,-1 L3.8,6.5 Z" fill="#f9d654" stroke="none"/>
  <path d="M-12.8,-5.2 L3.8,6.5 L12.2,-1 M3.8,6.5 V12.8 M-2,-6.4 L1.3,-1 L6.3,-4.3 M-2,-6.4 L5.5,-11.4" stroke="#7a5c10" stroke-width="1.100" fill="none"/>
</g>
<!-- tab 2: property manager (active) -->
<g>
  <rect x="80.500" y="252.500" width="25" height="24" fill="#fff" stroke="#1f4a72" stroke-width="2"/>
  <path d="M80.500,258 H105.500" stroke="#1f4a72" stroke-width="2.400"/>
  <path d="M84,261.500 h5 v3 h-5 z M84,267 h5 v3 h-5 z M84,272 h5 v2.500 h-5 z" fill="#4a90c8" stroke="#1f4a72" stroke-width="0.900"/>
  <path d="M92,263 H102.500 M92,268.500 H102.500 M92,273.500 H102.500" stroke="#333" stroke-width="1.500"/>
</g>
<!-- tab 3: configuration manager -->
<g stroke="#3a3a3a" stroke-width="1.700">
  <path d="M144,252 V276 M144,257 H150 M144,271 H153"/>
  <rect x="148" y="251.500" width="9.500" height="8" fill="#f4f4f4"/>
  <path d="M150,262 h9 v6 h-9 z" fill="#f4f4f4"/>
  <rect x="154.500" y="267.500" width="7.500" height="7.500" fill="#fff"/>
</g>
<!-- tab 4: dimxpert -->
<g stroke="#1d1d1d" stroke-width="2.300">
  <circle cx="212.500" cy="264.500" r="8.500"/>
  <path d="M212.500,251 V278 M199,264.500 H226"/>
</g>
<!-- tab 5: display manager -->
<g>
  <circle cx="272.500" cy="263.500" r="13" fill="#e33a2a" stroke="#7a7a7a" stroke-width="1"/>
  <path d="M272.500,263.500 L272.500,250.500 A13,13 0 0 0 259.500,263.500 Z" fill="#2f7fd2"/>
  <path d="M272.500,263.500 L259.500,263.500 A13,13 0 0 0 272.500,276.500 Z" fill="#49a83a"/>
  <path d="M272.500,263.500 L272.500,276.500 A13,13 0 0 0 284.500,268.500 Z" fill="#f0c030"/>
  <path d="M276,252 L284,262 L280,268 Z" fill="#151515"/>
  <ellipse cx="268" cy="257" rx="5" ry="3.500" fill="#fff" fill-opacity="0.600"/>
</g>
<path d="M313.500,261 V269 L308.500,265 Z M343.500,261 V269 L348.500,265 Z" fill="#1d1d1d" stroke="none"/>

<!-- Mirror title icon -->
<g stroke="#2d2d2d" stroke-width="1.600">
  <path d="M16,298.500 H20 V306 H26.500 V316.500 H16 Z" fill="#fff"/>
  <path d="M18.500,309 h5 v5 h-5 z" fill="#4fa0d8" stroke="none"/>
  <path d="M43,298.500 H39 V306 H32.500 V316.500 H43 Z" fill="#fff"/>
  <path d="M35,309 h5 v5 h-5 z" fill="#d8d8d8" stroke="none"/>
  <path d="M29.500,294.500 V320.500" stroke-width="1.300"/>
</g>
<!-- help -->
<circle cx="331" cy="307.500" r="9.800" stroke="#3d5f8a" stroke-width="1.700" fill="#fdfdfd"/>
<path d="M327.300,304.500 q0.200,-3.600 3.900,-3.600 q3.600,0.200 3.500,3.400 q-0.200,2 -2.200,3.200 q-1.500,1 -1.500,2.900" stroke="#2f6fc0" stroke-width="2.100"/>
<circle cx="331" cy="314" r="1.200" fill="#2f6fc0" stroke="none"/>
<!-- ok / cancel -->
<path d="M13.500,348.500 L19.500,354.500 L31.500,341.500" stroke="#3c9a2c" stroke-width="3.200"/>
<path d="M56.500,342 L71,356 M71,342 L56.500,356" stroke="#d8431f" stroke-width="2.800"/>

<!-- group chevrons -->
<use href="#chu" x="315" y="400.500"/><use href="#chu" x="315" y="494"/>
<use href="#chd" x="315" y="624.500"/><use href="#chd" x="315" y="672.500"/>
<use href="#chu" x="315" y="720"/><use href="#chu" x="315" y="838.500"/>
<!-- scrollbar arrows -->
<path d="M338.500,397.500 L344.500,391 L350.500,397.500" stroke="#444" stroke-width="2.200"/>
<path d="M338.500,1005.500 L344.500,1012 L350.500,1005.500" stroke="#444" stroke-width="2.200"/>

<!-- selection box icons -->
<use href="#cube" x="31.500" y="439.500"/><use href="#cube" x="31.500" y="532.500"/>
<g transform="translate(31 759)">
  <path d="M-12,-7 L0,-13 L12,-8 V4 L-1,11 L-12,5 Z" fill="#3f8fcd" stroke="#1f3f5f" stroke-width="1.700"/>
  <path d="M-12,-7 L-1,-2 L12,-8 M-1,-2 V11" stroke="#1f3f5f" stroke-width="1.400"/>
  <path d="M-12,-7 L0,-13 L12,-8 L-1,-2 Z" fill="#7fbde8" stroke="#1f3f5f" stroke-width="1.400"/>
  <path d="M1,2 L11,-4 L15,3 L9,8 L7,14 L1,9 Z" fill="#fff" stroke="#333" stroke-width="1.400"/>
</g>
<!-- check marks -->
<path d="M62.500,870.500 L66.500,875.500 L74,865" stroke="#2d2d2d" stroke-width="1.900"/>
<path d="M62.500,943 L66.500,948 L74,937.500" stroke="#2d2d2d" stroke-width="1.900"/>

<!-- bottom nav buttons -->
<g stroke="#b4b4b4" stroke-width="1" fill="#bdbdbd">
  <rect x="4" y="1032.500" width="22" height="18" fill="#cfcfcf"/><rect x="28" y="1032.500" width="22" height="18" fill="#cfcfcf"/>
  <rect x="52" y="1032.500" width="22" height="18" fill="#cfcfcf"/><rect x="76" y="1032.500" width="22" height="18" fill="#cfcfcf"/>
  <path d="M19,1037 v9 l-6,-4.500 z M11,1037 v9 M43,1037 v9 l-7,-4.500 z M59,1037 v9 l7,-4.500 z M83,1037 v9 l6,-4.500 z M91,1037 v9" fill="#b9b9b9" stroke="#b0b0b0" stroke-width="1.500"/>
</g>
</svg>
<!-- status bar right icons -->
<svg id="icons-status" style="left:1840px;top:1054px;" width="80" height="26" viewBox="1840 1054 80 26" fill="none" stroke-linejoin="round">
  <path d="M1843.500,1070 h8 l-4,-4.500 z" fill="#8a8a8a"/>
  <path d="M1893,1066 L1901,1058.500 L1914.500,1064 L1906.500,1072 Z" fill="#fff" stroke="#333" stroke-width="1.600"/>
  <path d="M1893,1066 V1070.500 L1906.500,1077 V1072 M1906.500,1077 L1914.500,1069 V1064" stroke="#333" stroke-width="1.600"/>
  <circle cx="1902" cy="1063.500" r="2.300" stroke="#333" stroke-width="1.300"/><path d="M1905,1067 l4,-3.500" stroke="#333" stroke-width="1.300"/>
</svg>
<!-- ================= 3D model (graphics area) ================= -->
<svg id="model" style="left:0;top:0;" width="1920" height="1080" viewBox="0 0 1920 1080">
<defs>
  <linearGradient id="fil" gradientUnits="userSpaceOnUse" x1="1085" y1="566" x2="1081.500" y2="597">
    <stop offset="0" stop-color="#0457b9"/>
    <stop offset="0.18" stop-color="#0457b9"/>
    <stop offset="0.42" stop-color="#0a72dc"/>
    <stop offset="0.62" stop-color="#3aaaff"/>
    <stop offset="0.8" stop-color="#1792ff"/>
    <stop offset="1" stop-color="#0087ff"/>
  </linearGradient>
  <linearGradient id="mouseg" x1="0" y1="0" x2="0" y2="1">
    <stop offset="0" stop-color="#fbfbfa"/><stop offset="0.55" stop-color="#e9e9e6"/><stop offset="1" stop-color="#cfcfcb"/>
  </linearGradient>
  <linearGradient id="holeg" gradientUnits="userSpaceOnUse" x1="1100" y1="785" x2="1165" y2="815">
    <stop offset="0" stop-color="#0457b9"/>
    <stop offset="1" stop-color="#0763cc"/>
  </linearGradient>
</defs>

<!-- ===== blue seed body ===== -->
<g id="bluebody" stroke-linejoin="round">
  <!-- silhouette, dark faces -->
  <path d="M910,276 L1066,295 L1106,334 L1132.5,500 L1142.5,562 C1144,580 1148,590 1155,597.5 L1397.5,866.5 L1368,926 L1047.5,887.5 L759,571 Z" fill="#0457b9"/>
  <!-- top chamfer face -->
  <path d="M910,276 L1066,295 L1106,334 L979,322 L946,318 Z" fill="#0087ff"/>
  <!-- base plate top face -->
  <path d="M1022,566 L1141,577 C1145,588 1149,593 1155,597.5 L1397.5,866 L1077.5,827.5 L1071,786 L1049,700 L1026,600 Z" fill="#0087ff"/>
  <!-- fillet between wedge face and base plate -->
  <path d="M1021.5,563 L1142.5,575 C1144,584 1149,592 1156,598.5 L1027,586 Z" fill="url(#fil)"/>
  <!-- window opening: inner walls (dark) -->
  <path d="M1032.5,612.5 L1073.8,617 L1095,632.5 L1117.5,648.8 Q1130,655 1142.5,657.5 L1163.8,662.5 L1306,819 L1212.5,808.8 L1185,806.3 Q1170,799 1156,788.8 Q1140,775 1125,767.5 Q1112,762.5 1100,761.3 L1097.5,760.8 L1070,735 L1051,707.5 L1045,675 Z" fill="#0457b9"/>
  <!-- see-through part of window -->
  <path d="M1045,675 L1061.3,690 Q1071,697 1082.5,702.5 L1107.5,715 Q1116,718 1123.8,718.8 L1133.8,720 L1212.5,808.8 L1185,806.3 Q1170,799 1156,788.8 Q1140,775 1125,767.5 Q1112,762.500 1100,761.3 L1097.5,760.8 L1076.7,740 L1070,735 L1051.3,707.5 Z" fill="#ffffff"/>
  <!-- chamfer strip along rib -->
  <path d="M946,318 L975,321.5 L1009,500 L1049,700 L1071,786 L1042,783 L1021,700 L981,500 Z" fill="#46d2ff"/>
  <path d="M979.5,322 L969,345 L984.6,373 Z" fill="#1f8eea"/>
  <!-- little face below strip -->
  <path d="M1042,783 L1071,786 L1077.5,827.5 Z" fill="#1a93ff"/>
  <!-- hole -->
  <ellipse cx="1132.5" cy="800" rx="43" ry="17.5" transform="rotate(27 1132.5 800)" fill="url(#holeg)"/>
</g>

<!-- ===== faint hidden-edge lines on the blue body ===== -->
<g id="hidden" fill="none" stroke="#4aa8ff" stroke-width="1.3" stroke-opacity="0.9" stroke-linecap="round">
  <path d="M910,276 L946,318" stroke="#5cc8ff" stroke-opacity="1"/>
  <path d="M979,322 L1106,334" stroke-opacity="0.5"/>
  <!-- hidden rib triangle (double line) -->
  <path d="M975,322 L875,520 L862.5,548 Q861,560 872,565 L990,582"/>
  <path d="M978,326 L879,522 L867,549 Q866,557 876,561 L992,578"/>
  <path d="M760,571 L1000,600"/>
  <path d="M866,566 L1010,740" stroke-opacity="0.55"/>
  <path d="M878,580 L1020,752" stroke-opacity="0.55"/>
  <!-- hidden box under the window -->
  <path d="M952.5,602.5 L1077.5,617.5 M952.5,602.5 L922.5,660 L1045,675 M952.5,602.5 L1040,700 M922.5,660 L1015,765" stroke-opacity="0.6"/>
  <path d="M1022,563.5 L1142.5,576.5" stroke-opacity="0.55"/>
  <!-- right wedge face -->
  <path d="M1070,297 L1102,520 L1110,552.5 L1095,578 M1110,552.5 L1138,575"/>
  <path d="M1073.8,617 L1163.8,662.5" stroke-opacity="0.45"/>
  <path d="M1073.8,617 L1045,675 M1163.8,662.5 L1133.8,720" stroke-opacity="0.8"/>
  <path d="M1117.5,648.8 L1267.5,816.3" stroke-opacity="0.75"/>
  <!-- lines on base plate top around hole / window -->
  <path d="M1077.5,827.5 L1095,762.5 M1181.6,808.7 L1154,863 M1212.5,808.8 L1306,819 L1306.3,822.6 L1277.6,879 L1154,863 M1214,810 L1277.6,879" stroke-opacity="0.7"/>
  <path d="M1267.5,816.3 L1367,925.500" stroke-opacity="0.7"/>
  <path d="M1077.5,827.5 L1397.5,866" stroke="#2fa0ff" stroke-opacity="0.9"/>
  <ellipse cx="1102" cy="857.5" rx="44" ry="18" transform="rotate(27 1102 857.5)" stroke-opacity="0.7"/>
  <path d="M1060.8,837.4 L1089.5,784 M1139,883 L1170.7,819.6" stroke-opacity="0.6"/>
  <!-- below strip -->
  <path d="M1042,783 L1077.5,827.5 M1071,786 L1077.5,827.5" stroke="#7fd8ff" stroke-opacity="0.8"/>
  <!-- mirror-face outline highlight -->
  <path d="M910,276 L759,571 L1047.5,887.5 L1077.5,827.5" stroke="#7fd6c8" stroke-width="1.6" stroke-opacity="1"/>
</g>

<!-- small origin cross -->
<path d="M910.5,496 h7 M914,492.5 v7" stroke="#5fb4ff" stroke-width="1" fill="none"/>

<!-- ===== yellow mirror preview wireframe ===== -->
<g id="preview" fill="none" stroke="#f2f01c" stroke-width="3" stroke-linecap="round" stroke-linejoin="round">
  <!-- mirrored wall (top-left beam) -->
  <path d="M910,276 L747.5,257.5 L468.3,473.3 L437.5,532.5"/>
  <path d="M747.5,257.5 L782.5,296 L943.3,316.7"/>
  <path d="M782.5,296 L520,500"/>
  <!-- fillet between wall and base (two long lines + end arc) -->
  <path d="M520,500 L793.3,534.5"/>
  <path d="M520,500 Q509,508 512,520 L796.7,555.5"/>
  <!-- base plate outline -->
  <path d="M437.5,532.5 L758,568"/>
  <path d="M437.5,532.5 L726,847 L1046,887.5"/>
  <path d="M468.3,473.3 L755,789.5 L1077.5,827.5"/>
  <path d="M726,847 L773.5,756"/>
  <!-- window box -->
  <path d="M648.3,565.8 L765.5,579 L740,636.7 L620,624.5"/>
  <path d="M648.3,565.8 L598.5,657"/>
  <path d="M648.3,565.8 Q660,578 657,588 Q652,599 631.7,598.3"/>
  <path d="M620,624.5 Q631,636 628,646 Q623,657 599,657.5"/>
  <path d="M631.7,598.3 L773.5,756 L893,770"/>
  <path d="M599,657.5 L743.3,813.3 L865,830 L912,744"/>
  <path d="M740,636.7 L881.7,797"/>
  <path d="M881.7,796 L857,801.5 Q853,815 865,829"/>
  <path d="M884,757 Q883,742 895,737 Q905,735 911,743"/>
  <!-- holes (mirrored) -->
  <ellipse cx="921" cy="838.5" rx="44" ry="18" transform="rotate(27 921 838.5)"/>
  <ellipse cx="949" cy="778.5" rx="44" ry="18" transform="rotate(27 949 778.5)"/>
  <!-- rib outline on the mirror face -->
  <path d="M906,313.3 L793.3,534.2 Q786,545 796.7,555.5 L1005,787 L1038.3,790"/>
  <path d="M911.7,314.2 Q920,320 921.7,332"/>
  <path d="M921,332.5 L812.5,542 L1010,761"/>
  <path d="M921.7,332 L960,520 L985,640 L1005,740 L1011.7,766 Q1012.5,778 1005,787"/>
  <path d="M1011.5,779 L1038.3,783.3"/>
  <path d="M793.3,534.2 Q813,538 812,546 Q808,555 796.7,555.5"/>
</g>

<!-- ===== cursor + mouse hint ===== -->
<g id="cursor">
  <path d="M1070,437 L1070,457 L1075,452.5 L1079,461 L1082.5,459.5 L1078.5,451 L1085,451 Z" fill="#f2f2f2" stroke="#3a3a3a" stroke-width="1.2" stroke-linejoin="round"/>
  <rect x="1086" y="436" width="29" height="44" rx="13" ry="13" fill="url(#mouseg)" stroke="#a4a4a4" stroke-width="1"/>
  <path d="M1086.5,455 H1114.5 M1100.5,436.5 V455" stroke="#8d8d8d" stroke-width="1" fill="none"/>
  <path d="M1102.5,446 l3,3.4 l6,-6.8" stroke="#2a9a2a" stroke-width="2.2" fill="none"/>
</g>

<!-- ===== reference triad ===== -->
<g id="triad" stroke-linecap="butt">
  <path d="M423.5,941 L438.5,908" stroke="#b4e6b8" stroke-width="8"/>
  <path d="M435.5,908.5 L442.8,904.5 L443,913 Z" fill="#c8eecb" stroke="none"/>
  <path d="M432.5,913 Q437,918.5 444,917" stroke="#1f7a35" stroke-width="3.5" fill="none"/>
  <path d="M428,942.5 L447,945" stroke="#c01a10" stroke-width="5"/>
  <path d="M445,939.5 L458,945.5 L445,951 Z" fill="#c01a10"/>
  <path d="M423.5,941 L442,960.5" stroke="#1c1cb8" stroke-width="8"/>
  <path d="M436.5,958.5 L444,955 L446,965.5 L438.5,967 Z" fill="#1c1cb8"/>
</g>

<!-- ===== faded confirmation-corner OK / Cancel ===== -->
<g id="confirm" fill="none" stroke-linecap="round" stroke-linejoin="round">
  <path d="M1770,245 L1781,256 L1803,236" stroke="#cde3c9" stroke-width="9"/>
  <path d="M1839,280 L1863,304 M1863,280 L1839,304" stroke="#f5ccc8" stroke-width="10"/>
</g>
</svg>
</body>
</html>
